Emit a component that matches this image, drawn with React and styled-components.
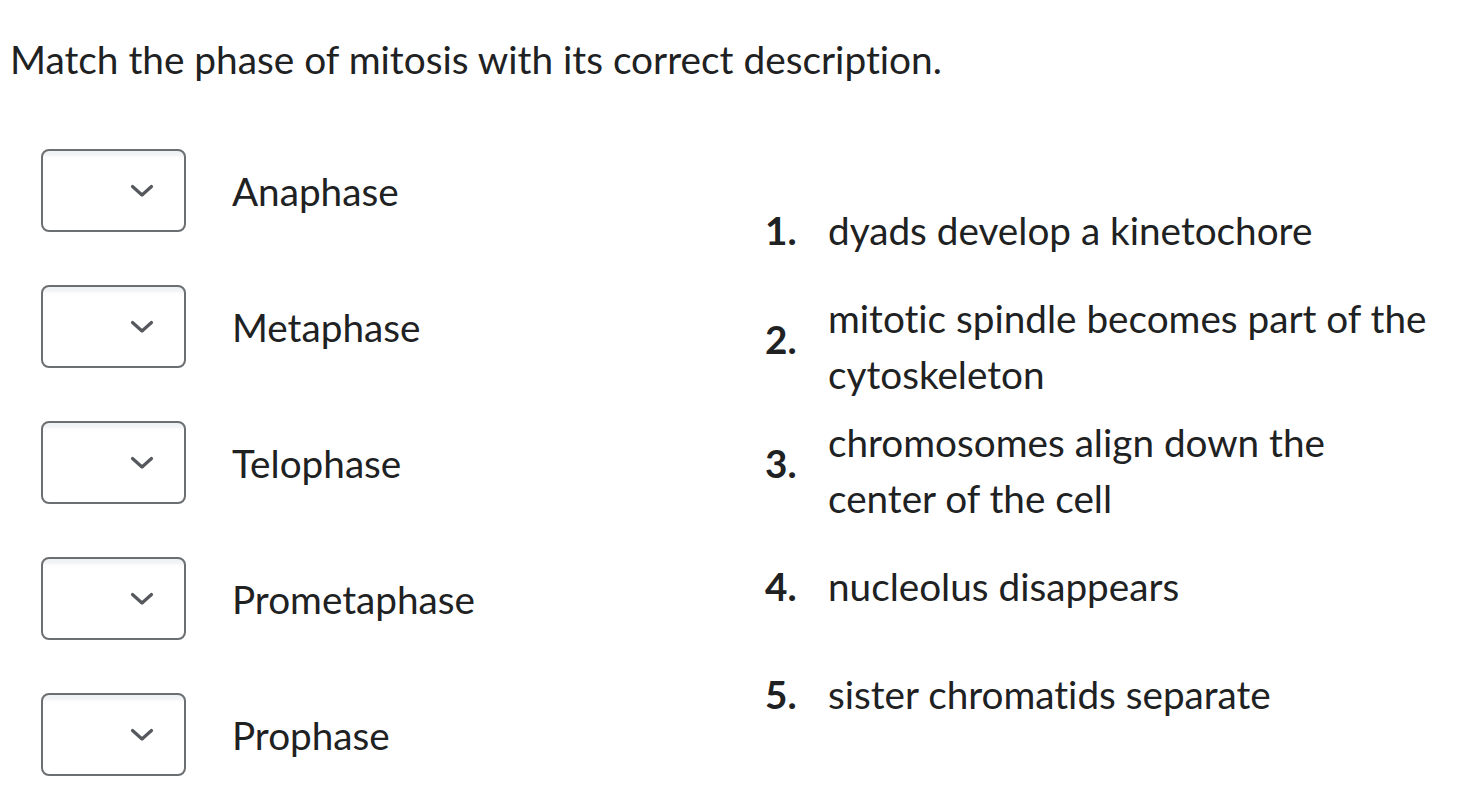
import React from "react";
import styled, { createGlobalStyle } from "styled-components";

const Global = createGlobalStyle`
  html, body { margin: 0; padding: 0; background: #fff; }
  body {
    font-family: Lato, "Noto Sans", sans-serif;
    color: #202122;
    font-variant-ligatures: none;
    font-feature-settings: "liga" 0;
  }
`;

const Page = styled.div`
  width: 1476px;
  height: 792px;
  box-sizing: border-box;
  padding: 36px 0 0 10px;
  overflow: hidden;
`;

const Title = styled.h1`
  margin: 0;
  font-size: 38.8px;
  font-weight: 400;
  line-height: 46px;
`;

const Body = styled.div`
  display: flex;
  margin-top: 67px;
`;

const LeftCol = styled.div`
  display: flex;
  flex-direction: column;
  gap: 53px;
  padding-left: 31px;
  width: 724px;
`;

const Row = styled.div`
  display: flex;
  align-items: center;
  gap: 46px;
  height: 83px;
`;

const Select = styled.div`
  width: 145px;
  height: 83px;
  box-sizing: border-box;
  border: 2px solid #6c6f72;
  border-radius: 8px;
  background: linear-gradient(#eff0f2 0, #f3f4f5 4px, #fff 7px);
  display: flex;
  align-items: center;
  justify-content: flex-end;
  padding-right: 30px;
`;

const Label = styled.span`
  font-size: 38.7px;
  line-height: 46px;
`;

const RightCol = styled.ol`
  list-style: none;
  margin: 0;
  padding: 53px 0 0 0;
  display: flex;
  flex-direction: column;
`;

const Item = styled.li`
  display: flex;
  align-items: center;
  margin-top: ${(p) => p.$top}px;
`;

const Num = styled.span`
  width: 63px;
  font-size: 38.7px;
  font-weight: 700;
  line-height: 56px;
  flex-shrink: 0;
  margin-top: ${(p) => (p.$multi ? -14 : 0)}px;
`;

const Text = styled.span`
  font-size: 38.7px;
  line-height: 56px;
  width: 608px;
`;

const Chevron = () => (
  <svg width="24" height="14" viewBox="0 0 24 14" fill="none">
    <path d="M2.5 2.5L12 11l9.5-8.5" stroke="#55585c" strokeWidth="3.2" strokeLinecap="round" strokeLinejoin="round" />
  </svg>
);

const phases = ["Anaphase", "Metaphase", "Telophase", "Prometaphase", "Prophase"];
const items = [
  { n: 1, t: "dyads develop a kinetochore", top: 0 },
  { n: 2, t: "mitotic spindle becomes part of the cytoskeleton", top: 32, multi: true },
  { n: 3, t: "chromosomes align down the center of the cell", top: 12, multi: true },
  { n: 4, t: "nucleolus disappears", top: 32 },
  { n: 5, t: "sister chromatids separate", top: 52 },
];

export default function App() {
  return (
    <>
      <Global />
      <Page>
        <Title>Match the phase of mitosis with its correct description.</Title>
        <Body>
          <LeftCol>
            {phases.map((p) => (
              <Row key={p}>
                <Select>
                  <Chevron />
                </Select>
                <Label>{p}</Label>
              </Row>
            ))}
          </LeftCol>
          <RightCol>
            {items.map((it) => (
              <Item key={it.n} $top={it.top}>
                <Num $multi={it.multi}>{it.n}.</Num>
                <Text>{it.t}</Text>
              </Item>
            ))}
          </RightCol>
        </Body>
      </Page>
    </>
  );
}
